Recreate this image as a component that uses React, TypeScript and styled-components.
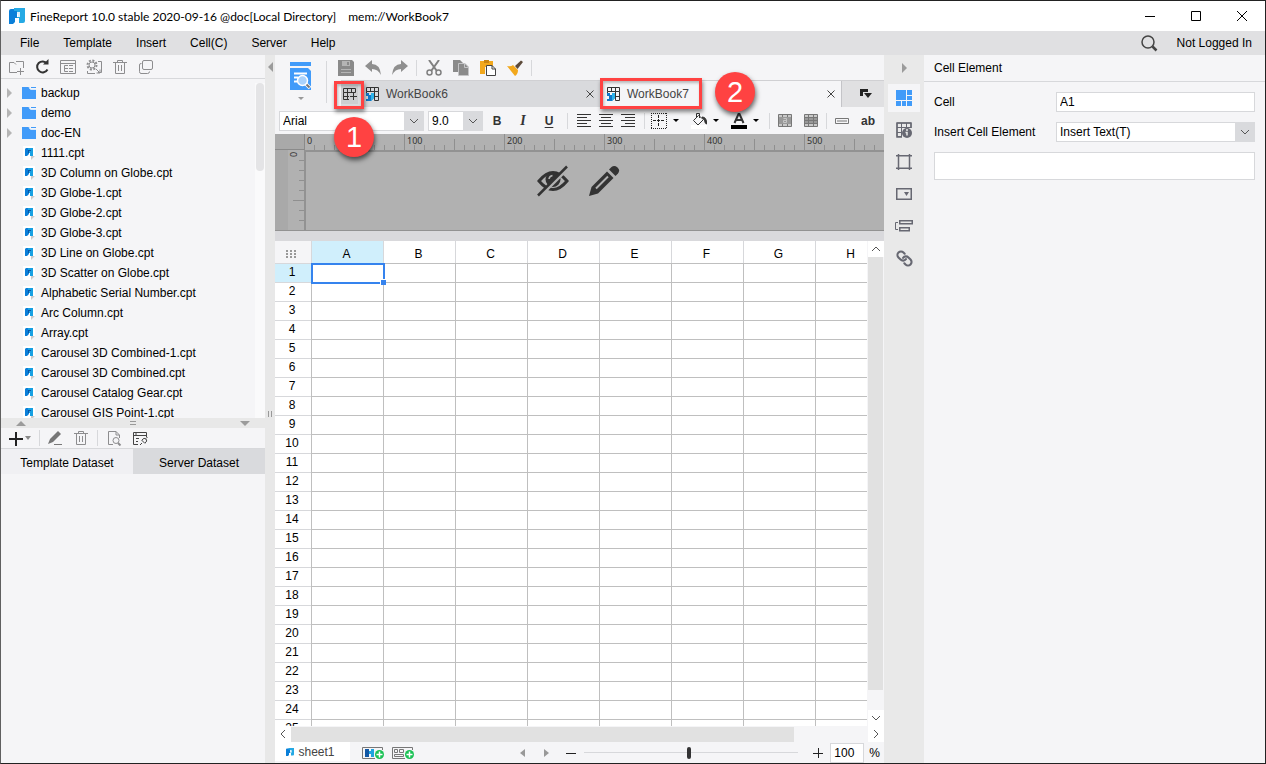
import React from "react";
import styled, { createGlobalStyle, css } from "styled-components";
import { Link } from "lucide-react";

const c = {
  panel: "#f5f5f7",
  bar: "#e0e0e2",
  gutter: "#e8e8e8",
  strip: "#d9dadd",
  line: "#d7d8db",
  icon: "#8d8d8f",
  dark: "#333334",
  blue: "#419bf9",
  red: "#ff4242",
};

const Global = createGlobalStyle`
  *, *::before, *::after { box-sizing: border-box; }
  body { margin: 0; background: ${c.panel}; }
  body, button, input, select, table {
    font-family: "Liberation Sans", Arial, sans-serif;
    font-size: 12px;
    color: #000;
  }
  button {
    border: 0; padding: 0; margin: 0; background: none;
    display: inline-flex; align-items: center; justify-content: center;
  }
  svg { display: block; flex: none; }
  ul { list-style: none; margin: 0; padding: 0; }
`;

/* ---------- shell ---------- */
const Window = styled.div`
  height: 100vh;
  display: flex;
  flex-direction: column;
  border: 1px solid #222;
  border-left-color: #606060;
  background: ${c.panel};
  overflow: hidden;
`;
const TitleBar = styled.header`
  flex: 0 0 30px;
  display: flex;
  align-items: center;
  padding-left: 8px;
  background: #fff;
  font-family: Lato, "Open Sans", sans-serif;
`;
const Title = styled.span`
  margin-left: 5px;
  margin-right: 7px;
  white-space: pre;
`;
const WindowButtons = styled.div`
  margin-left: auto;
  display: flex;
`;
const WindowButton = styled.button`
  width: 46px;
  height: 30px;
`;
const MenuBar = styled.nav`
  flex: 0 0 24px;
  display: flex;
  align-items: center;
  padding: 0 13px 0 7px;
  background: ${c.bar};
`;
const MenuItem = styled.button`
  height: 24px;
  padding: 0 12px;
`;
const MenuRight = styled.div`
  margin-left: auto;
  display: flex;
  gap: 19px;
`;
const Body = styled.main`
  flex: 1;
  min-height: 0;
  display: flex;
`;

/* ---------- shared controls ---------- */
const Row = styled.div<{ $h: number; $pad?: number; $line?: boolean }>`
  flex: 0 0 ${(p) => p.$h}px;
  display: flex;
  align-items: center;
  padding-left: ${(p) => p.$pad ?? 0}px;
  ${(p) => p.$line && css`border-bottom: 1px solid ${c.line};`}
`;
const ToolButton = styled.button<{ $w?: number }>`
  width: ${(p) => p.$w ?? 26}px;
  height: 20px;
  flex: none;
`;
const Sep = styled.span<{ $m?: number; $h?: number }>`
  width: 1px;
  height: ${(p) => p.$h ?? 16}px;
  margin: 0 ${(p) => p.$m ?? 3}px;
  background: ${c.line};
  flex: none;
`;
const PreviewSep = styled(Sep)`
  margin: 6px 0 0;
`;
const Group = styled.div`
  display: flex;
  gap: 6px;
`;
const SelectBox = styled.div<{ $w?: string }>`
  display: grid;
  width: ${(p) => p.$w ?? "100%"};
  height: 20px;
  flex: none;
  & > * { grid-area: 1 / 1; }
`;
const Selects = styled.div`
  display: flex;
  gap: 4px;
  margin-right: 1px;
`;
const Select = styled.select`
  appearance: none;
  width: 100%;
  height: 20px;
  border: 1px solid ${c.line};
  border-radius: 0;
  background: #fff;
  padding: 0 22px 0 3px;
`;
const SelectArrow = styled.span`
  justify-self: end;
  width: 20px;
  height: 20px;
  background: ${c.strip};
  display: flex;
  align-items: center;
  justify-content: center;
  pointer-events: none;
`;
const TextInput = styled.input<{ $h?: number }>`
  width: 100%;
  height: ${(p) => p.$h ?? 20}px;
  border: 1px solid ${c.line};
  background: #fff;
  padding: 0 3px;
`;

/* ---------- left side ---------- */
const Left = styled.aside`
  flex: 0 0 264px;
  display: flex;
  flex-direction: column;
  min-height: 0;
`;
const TreeArea = styled.div`
  flex: 0 0 339px;
  display: flex;
  overflow: hidden;
  padding-top: 4px;
`;
const Tree = styled.ul`
  flex: 1;
`;
const TreeRow = styled.button`
  display: flex;
  width: 100%;
  height: 20px;
  justify-content: flex-start;
  white-space: nowrap;
`;
const Twisty = styled.span`
  width: 20px;
  padding-left: 6px;
`;
const TreeIcon = styled.span`
  width: 20px;
  display: flex;
  padding-left: 1px;
`;
const TreeTrack = styled.div`
  width: 10px;
  background: #fafafb;
`;
const TreeThumb = styled.div`
  margin-left: 1px;
  width: 8px;
  height: 88px;
  border-radius: 4px;
  background: #e4e4e6;
`;
const HSplit = styled.div`
  flex: 0 0 10px;
  display: flex;
  align-items: center;
  justify-content: space-between;
  padding: 0 15px;
  background: ${c.gutter};
`;
const Tabs = styled.div`
  display: flex;
`;
const DatasetTab = styled.button<{ $on?: boolean }>`
  flex: 1;
  height: 25px;
  padding-top: 2px;
  background: ${(p) => (p.$on ? "#f0f0f3" : c.strip)};
`;
const Gutter = styled.div`
  flex: 0 0 10px;
  display: flex;
  flex-direction: column;
  align-items: center;
  justify-content: space-between;
  padding: 7px 0 346px;
  background: ${c.gutter};
`;

/* ---------- centre ---------- */
const Center = styled.section`
  flex: 1;
  min-width: 0;
  display: flex;
  flex-direction: column;
`;
const TopTools = styled.div`
  flex: 0 0 52px;
  display: flex;
`;
const Preview = styled.button`
  width: 51px;
  flex-direction: column;
  gap: 6px;
`;
const ToolsColumn = styled.div`
  flex: 1;
  min-width: 0;
  display: flex;
  flex-direction: column;
`;
const TabStrip = styled.div`
  height: 27px;
  margin-left: 14px;
  display: flex;
  border-top: 1px solid #d0d0d3;
  background: ${c.strip};
`;
const NewTab = styled.div`
  width: 24px;
  position: relative;
  display: flex;
  align-items: center;
`;
const NewTabButton = styled.button`
  width: 17px;
  height: 19px;
  background: #cdced1;
`;
const BookTab = styled.div<{ $on?: boolean }>`
  position: relative;
  flex: 1;
  display: flex;
  align-items: center;
  padding: 0 6px 0 ${(p) => (p.$on ? 7 : 1)}px;
  background: ${(p) => (p.$on ? c.panel : "transparent")};
`;
const BookName = styled.button`
  gap: 6px;
  color: #444;
  margin-right: auto;
`;
const TabList = styled.button`
  width: 43px;
  border-left: 1px solid #c4c4c8;
  background: ${c.bar};
  padding-left: 6px;
`;
const MarkBox = styled.span<{ $x: number; $y: number; $w: number; $h: number }>`
  position: absolute;
  left: ${(p) => p.$x}px;
  top: ${(p) => p.$y}px;
  width: ${(p) => p.$w}px;
  height: ${(p) => p.$h}px;
  border: 3px solid ${c.red};
  box-shadow: 1px 3px 4px rgba(0, 0, 0, 0.45), inset 1px 2px 3px rgba(0, 0, 0, 0.25);
  pointer-events: none;
  z-index: 2;
`;
const MarkDot = styled.span<{ $x: number; $y: number }>`
  position: absolute;
  left: ${(p) => p.$x}px;
  top: ${(p) => p.$y}px;
  width: 40px;
  height: 40px;
  border-radius: 50%;
  background: ${c.red};
  box-shadow: 1px 3px 5px rgba(0, 0, 0, 0.6);
  color: #fff;
  font: 29px/40px "Liberation Sans", Arial, sans-serif;
  text-align: center;
  pointer-events: none;
  z-index: 3;
`;
const TextStyle = styled(ToolButton)<{ $kind: "b" | "i" | "u" }>`
  color: ${c.dark};
  font-weight: bold;
  ${(p) => p.$kind === "i" && css`font-family: "Liberation Serif", serif; font-style: italic; font-size: 14px;`}
  ${(p) => p.$kind === "u" && css`text-decoration: underline; text-underline-offset: 2px;`}
`;
const DropTool = styled.button`
  width: 34px;
  height: 20px;
  justify-content: space-between;
  padding: 0 5px 0 1px;
`;
const ParamPane = styled.div`
  flex: 0 0 97px;
  display: grid;
  grid-template: 16px 1fr / 13px 16px 1fr;
  background: #b1b1b1;
  border-bottom: 1px solid #929292;
`;
const Corner = styled.div`
  grid-column: 1 / 3;
  background: #a9a9a9;
  border-bottom: 1px solid #8a8a8a;
`;
const HRuler = styled.div`
  overflow: hidden;
  border-left: 1px solid #8a8a8a;
`;
const Edge = styled.div`
  background: #a9a9a9;
`;
const VRuler = styled.div`
  overflow: hidden;
`;
const ParamCanvas = styled.div`
  border-left: 2px solid #929292;
  border-top: 2px solid #929292;
  display: flex;
  justify-content: center;
  gap: 18px;
  padding: 13px 34px 0 0;
`;
const PaneButton = styled.button`
  height: 32px;
`;
const PaneSplit = styled.div`
  flex: 0 0 10px;
  background: #d9d9dc;
`;
const SheetArea = styled.div`
  flex: 1;
  min-height: 0;
  display: flex;
`;
const SheetClip = styled.div`
  flex: 1;
  overflow: hidden;
  background: #fff;
`;
const Sheet = styled.table`
  width: 612px;
  table-layout: fixed;
  border-collapse: separate;
  border-spacing: 0;
  & th { font-weight: normal; padding: 0 2px 0 0; text-align: center; }
`;
const SelectAll = styled.td`
  width: 36px;
  height: 22px;
  padding: 4px 0 0 11px;
  background: ${c.panel};
`;
const ColHead = styled.th<{ $on?: boolean }>`
  width: 72px;
  height: 22px;
  line-height: 22px;
  border-left: 1px solid ${c.line};
  background: ${(p) => (p.$on ? "#d0effc" : "#fff")};
  & > span { display: block; height: 22px; line-height: 26px; }
`;
const RowHead = styled.th<{ $on?: boolean }>`
  height: 19px;
  line-height: 16px;
  vertical-align: top;
  border-top: 1px solid ${c.line};
  background: ${(p) => (p.$on ? "#d0effc" : "#fff")};
`;
const Cell = styled.td`
  padding: 0;
  border-top: 1px solid #bfbfbf;
  border-left: 1px solid #bfbfbf;
  position: relative;
`;
const Selection = styled.span`
  position: absolute;
  inset: -1px -2px -2px -1px;
  border: 2px solid #3583ee;
  z-index: 1;
  &::after {
    content: "";
    position: absolute;
    right: -3px;
    bottom: -3px;
    width: 6px;
    height: 6px;
    background: #3583ee;
    border-left: 1px solid #fff;
    border-top: 1px solid #fff;
  }
`;
const VScroll = styled.div`
  flex: 0 0 17px;
  display: flex;
  flex-direction: column;
  padding-left: 1px;
`;
const VThumb = styled.div`
  flex: 432;
  width: 15px;
  background: #e1e1e1;
`;
const Rest = styled.div<{ $n: number }>`
  flex: ${(p) => p.$n};
`;
const ScrollButton = styled.button`
  flex: none;
  width: 16px;
  height: 16px;
  background: #fff;
`;
const HScroll = styled.div`
  flex: 0 0 16px;
  display: flex;
`;
const HThumb = styled.div`
  flex: 503;
  margin-top: 1px;
  background: #e1e1e1;
`;
const BottomBar = styled.footer`
  flex: 0 0 21px;
  display: flex;
  align-items: center;
`;
const SheetTab = styled.button`
  width: 75px;
  height: 19px;
  align-self: flex-start;
  gap: 4px;
  background: #fff;
  color: #444;
  margin-right: 12px;
  padding-right: 4px;
`;
const AddButtons = styled.div`
  display: flex;
  gap: 8px;
  margin-right: 96px;
`;
const ZoomSlider = styled.input`
  flex: 1;
  min-width: 0;
  height: 16px;
  margin: 0 8px 0 0;
  appearance: none;
  background: linear-gradient(${c.line}, ${c.line}) center / 100% 1px no-repeat;
  &::-webkit-slider-thumb {
    appearance: none;
    width: 4px;
    height: 12px;
    border-radius: 2px;
    background: ${c.dark};
  }
`;
const Percent = styled.label`
  display: flex;
  align-items: center;
  gap: 5px;
  padding-right: 4px;
`;
const PercentInput = styled(TextInput)`
  width: 34px;
`;

/* ---------- right side ---------- */
const Rail = styled.nav`
  flex: 0 0 40px;
  display: flex;
  flex-direction: column;
  align-items: center;
  gap: 4px;
  background: #e9e9e9;
`;
const RailArrow = styled.button`
  width: 40px;
  height: 25px;
`;
const RailButton = styled.button<{ $on?: boolean }>`
  width: 32px;
  height: 28px;
  background: ${(p) => (p.$on ? c.panel : "transparent")};
`;
const LinkIcon = styled(Link)`
  transform: scaleX(-1);
  color: #676872;
`;
const Props = styled.aside`
  flex: 0 0 341px;
  display: flex;
  flex-direction: column;
`;
const Form = styled.div`
  display: grid;
  grid-template-columns: 112px 1fr;
  gap: 10px;
  padding: 10px;
  align-items: center;
`;
const Wide = styled.div`
  grid-column: 1 / 3;
`;

/* ---------- icons ---------- */
type SvgProps = { w?: number; h?: number; s?: string; f?: string; sw?: number; children: React.ReactNode };
const Svg = ({ w = 16, h = 16, s = c.icon, f = "none", sw = 1, children }: SvgProps) => (
  <svg width={w} height={h} viewBox={`0 0 ${w} ${h}`} stroke={s} fill={f} strokeWidth={sw} aria-hidden="true">
    {children}
  </svg>
);
const Tri = ({ dir, color = "#9b9b9b" }: { dir: "up" | "down" | "left" | "right"; color?: string }) => {
  const d = { up: "M0 5 5 0 10 5z", down: "M0 0H10L5 5z", left: "M5 0V10L0 5z", right: "M0 0V10L5 5z" }[dir];
  const v = dir === "up" || dir === "down";
  return <Svg w={v ? 10 : 5} h={v ? 5 : 10} s="none" f={color}><path d={d} /></Svg>;
};
const SmallCaret = ({ color = "#000" }: { color?: string }) => (
  <Svg w={6} h={3} s="none" f={color}><path d="M0 0H6L3 3z" /></Svg>
);
const Chevron = ({ r = 0 }: { r?: number }) => (
  <Svg w={12} h={12} s="#555"><path d="M2 4 6 8 10 4" transform={`rotate(${r} 6 6)`} /></Svg>
);
const Logo = ({ size = 16 }: { size?: number }) => (
  <svg width={size} height={size} viewBox="0 0 16 16" aria-hidden="true">
    <path d="M2 1H8V10H6V14L4 16H0V3Q0 1 2 1z" fill="#0a7fd9" />
    <path d="M5 0H16V13Q16 15 14 15H10V10H8V9H11V5H8V3H5z" fill="#25a9e4" />
    <path d="M8 4H11V9H9V6H8z" fill="#d9f0fb" />
  </svg>
);
const FileIcon = () => (
  <Svg w={14} h={14} s="none" f="#fff">
    <path d="M1 0H13V10L9 14H1z" />
    <path d="M9 14V10H13z" fill="#c9c9cc" />
    <path d="M4 2H7V8L5 10H3V3z" fill="#0a7fd9" />
    <path d="M6 2H11V10H8V7H6z" fill="#17a0e2" />
    <path d="M6 4H9V5H7V7H6z" fill="#0a55a5" />
  </Svg>
);
const FolderIcon = () => (
  <Svg w={14} h={12} s="none" f={c.blue}>
    <path d="M0 0H7L8 2H14V12H0z" /><path d="M9 0H14V1H9z" /><path d="M7 .5 8.500 2.500H14" fill="none" stroke="#d6e9fd" />
  </Svg>
);
const Trash = () => (
  <Svg><path d="M1 3.500H15M5.500 3V1.500H10.500V3M3.500 4V14.500H12.500V4M6.500 6V12M9.500 6V12" /></Svg>
);
const Grid = ({ plus }: { plus?: boolean }) => (
  <Svg w={14} h={14} s="#333">
    {plus ? <path d="M.5 1.500H12.500V5.500H.5zM.5 5.500V12.500H6M.5 9.500H6M4.500 1.500V12.500M8.500 1.500V5.500M7 9.500H14M10.500 6V13" />
      : <><path d="M.5.5H12.500V4.500H.5zM4.500.5V4.500M8.500.5V13.500H12.500V4.500M.5 4.500V7M8.500 9.500H12.500" />
        <path d="M0 6H3V8H5V6H8V11L5 14H0V12H2V9H0z" fill="#1178c8" stroke="none" /><path d="M5 6H8V11L5 14z" fill="#2eb3ea" stroke="none" /></>}
  </Svg>
);
const CloseX = () => <Svg w={8} h={8} s="#444"><path d="M.5.5 7.500 7.500M7.500.5.5 7.500" /></Svg>;
const Align = ({ k }: { k: "l" | "c" | "r" }) => {
  const x = { l: 0, c: 2, r: 4 }[k];
  return (
    <Svg w={14} h={13} s="#333">
      <path d={`M0 .5H14M${x} 3.500H${x + 10}M0 6.500H14M${x} 9.500H${x + 10}M0 12.500H14`} />
    </Svg>
  );
};
const AddBadge = ({ kind }: { kind: "report" | "form" }) => (
  <Svg w={22} h={14} s="#777">
    <path d="M20.500 1.500H.5V12.500H13M20.500 1.500V4" />
    {kind === "report"
      ? <><path d="M3 3H7V11H3z" fill="#1257a4" stroke="none" /><path d="M7 5H9V3H12V11H9V8H7z" fill="#1fa4df" stroke="none" /></>
      : <path d="M2.500 3.500H5.500V6.500H2.500zM7.500 3.500H11.500V6.500H7.500zM2.500 8.500H11.500V10.500H2.500z" />}
    <circle cx="17.500" cy="8.500" r="4.500" fill="#19c153" stroke="none" />
    <path d="M14.500 8.500H20.500M17.500 5.500V11.500" stroke="#fff" strokeWidth="1.500" />
  </Svg>
);

const files = [
  "1111.cpt", "3D Column on Globe.cpt", "3D Globe-1.cpt", "3D Globe-2.cpt", "3D Globe-3.cpt",
  "3D Line on Globe.cpt", "3D Scatter on Globe.cpt", "Alphabetic Serial Number.cpt", "Arc Column.cpt",
  "Array.cpt", "Carousel 3D Combined-1.cpt", "Carousel 3D Combined.cpt", "Carousel Catalog Gear.cpt",
  "Carousel GIS Point-1.cpt",
];
const cols = ["A", "B", "C", "D", "E", "F", "G", "H"];
const rows = Array.from({ length: 25 }, (_, i) => i + 1);

const RulerTicks = () => (
  <svg width="579" height="16" fill="none" stroke="#8f8f8f" aria-hidden="true">
    {Array.from({ length: 58 }, (_, i) => (
      <path key={i} d={`M${i * 10 - 0.5} ${i % 10 === 0 ? 0 : i % 5 === 0 ? 5 : 11}V16`} />
    ))}
    {[0, 100, 200, 300, 400, 500].map((n) => (
      <text key={n} x={n + 2} y={10} fill="#333" stroke="none" fontSize="9" fontFamily="Noto Sans, sans-serif">
        {n}
      </text>
    ))}
  </svg>
);

function LeftPane() {
  return (
    <Left>
      <Row $h={24} $pad={2} $line>
        <ToolButton aria-label="New folder"><Svg><path d="M9 13.500H1.500V3.500H6L8 5.500M8 2.500H15.500V9M9 12.500H16M12.500 9V16" /></Svg></ToolButton>
        <ToolButton aria-label="Refresh"><Svg s="#333" sw={2}><path d="M13 4.500A5.500 5.500 0 1 0 13.500 10.500" /><path d="M9 5.500H14.500V0z" fill="#333" stroke="none" /></Svg></ToolButton>
        <ToolButton aria-label="Template list"><Svg><path d="M.5 1.500H15.500V14.500H.5zM.5 4.500H15.500M4.500 6.500H8M4.500 6.500V12.500H8M4.500 9.500H8M9 6.500H13M9 9.500H13M9 12.500H13" /></Svg></ToolButton>
        <ToolButton aria-label="Settings">
          <Svg><circle cx="6" cy="6" r="3" /><circle cx="6" cy="6" r="4.500" strokeDasharray="2 1.500" strokeWidth="2" /><path d="M12 2.500H15.500V13.500H12M1.500 12V14.500H9M10 10 14 14M14 10.500V14H10.500" /></Svg>
        </ToolButton>
        <ToolButton aria-label="Delete"><Trash /></ToolButton>
        <ToolButton aria-label="Copy"><Svg><rect x="4.500" y="1.500" width="10" height="9" rx="1.500" /><path d="M3.500 4.500H3Q1.500 4.500 1.500 6V12.500Q1.500 14.500 3 14.500H9.500Q11.500 14.500 11.500 12.500" /></Svg></ToolButton>
      </Row>
      <TreeArea>
        <Tree>
          {["backup", "demo", "doc-EN"].map((n) => (
            <li key={n}><TreeRow><Twisty><Tri dir="right" color="#b5b5b5" /></Twisty><TreeIcon><FolderIcon /></TreeIcon>{n}</TreeRow></li>
          ))}
          {files.map((n) => (
            <li key={n}><TreeRow><Twisty /><TreeIcon><FileIcon /></TreeIcon>{n}</TreeRow></li>
          ))}
        </Tree>
        <TreeTrack><TreeThumb /></TreeTrack>
      </TreeArea>
      <HSplit>
        <Tri dir="up" />
        <Svg w={6} h={4} s="#999"><path d="M0 .5H6M0 3.500H6" /></Svg>
        <Tri dir="down" />
      </HSplit>
      <Row $h={21} $pad={2} $line>
        <ToolButton $w={34} aria-label="Add dataset">
          <Svg w={15} h={15} s="#222" sw={2}><path d="M0 8H14M7 1V15" /></Svg>
          <Svg w={7} h={4} s="none" f="#888"><path d="M1 0H7L4 4z" /></Svg>
        </ToolButton>
        <Sep $m={2} />
        <ToolButton aria-label="Edit"><Svg s="none" f="#777"><path d="M1 14 3 9 11 1 14 4 6 12z" /><path d="M7 14H15V15H7z" /></Svg></ToolButton>
        <ToolButton aria-label="Remove"><Trash /></ToolButton>
        <Sep />
        <ToolButton aria-label="Preview dataset"><Svg><path d="M7 14.500H2.500V1.500H10L13.500 5V8M10 1.500V5H13" /><circle cx="10" cy="10.500" r="3" /><path d="M12 13 14.500 15.500" strokeWidth="2" /></Svg></ToolButton>
        <ToolButton aria-label="Connection"><Svg s="#444"><path d="M6 14.500H1.500V2.500H14.500V7M1.500 5.500H14.500M3 4H5M4 8.500H7M4 11.500H6" /><path d="M8 15 10 13M9.500 10 13 13.500M10 10Q12 7 14 9T13 13M14 8.500 15.500 7" /></Svg></ToolButton>
      </Row>
      <Tabs>
        <DatasetTab $on>Template Dataset</DatasetTab>
        <DatasetTab>Server Dataset</DatasetTab>
      </Tabs>
    </Left>
  );
}

function TopArea() {
  return (
    <TopTools>
      <Preview aria-label="Preview">
        <svg width="22" height="29" viewBox="0 0 22 29" aria-hidden="true">
          <path d="M0 0H21V4H0z" fill={c.blue} /><path d="M0 6H18L21 9V28H0z" fill={c.blue} />
          <path d="M4 11.500H17M4 15.500H8M4 19.500H7" stroke="#fff" strokeWidth="2" />
          <circle cx="12.500" cy="18.500" r="5" fill="#a9d2fc" stroke="#fff" strokeWidth="1.500" />
          <path d="M16 22 20 26" stroke="#fff" strokeWidth="3.500" /><path d="M16.500 22.500 19.500 25.500" stroke="#777" strokeWidth="2" />
        </svg>
        <SmallCaret color="#999" />
      </Preview>
      <PreviewSep $h={42} />
      <ToolsColumn>
        <Row $h={25} $pad={5}>
          <ToolButton $w={27} aria-label="Save"><Svg s="none" f="#8a8a8a"><path d="M0 0H14L16 2V16H0z" /><path d="M4 1H12V6H4z" fill="#b5b5b5" /><path d="M9 2H11V5H9z" fill="#8a8a8a" /><path d="M3 9H13V10H3zM3 12H13V13H3z" fill="#b5b5b5" /></Svg></ToolButton>
          <ToolButton $w={27} aria-label="Undo"><Svg s="none" f="#8f8f8f"><path d="M0 6 7 0V4Q15 4 16 15 13 9 7 9V12z" /></Svg></ToolButton>
          <ToolButton $w={27} aria-label="Redo"><Svg s="none" f="#8f8f8f"><path d="M16 6 9 0V4Q1 4 0 15 3 9 9 9V12z" /></Svg></ToolButton>
          <Sep />
          <ToolButton $w={27} aria-label="Cut"><Svg s="#808080" sw={2}><circle cx="3.500" cy="12.500" r="2.500" strokeWidth="1.500" /><circle cx="12.500" cy="12.500" r="2.500" strokeWidth="1.500" /><path d="M3 0 10.500 10.500M13 0 5.500 10.500" /></Svg></ToolButton>
          <ToolButton $w={27} aria-label="Copy"><Svg s="none" f="#8a8a8a"><path d="M0 0H7L10 3V12H0z" /><path d="M5.500 3.500H12L15.500 7V15.500H5.500z" stroke="#c4c4c6" /><path d="M11.500 4V7.500H15" fill="none" stroke="#c4c4c6" /></Svg></ToolButton>
          <ToolButton $w={27} aria-label="Paste"><Svg s="none" f="#f2a81d"><path d="M0 1H13V7H5V14H0z" /><path d="M4 0H9V3H4z" fill="#c98512" /><path d="M6.500 5.500H12L15.500 9V15.500H6.500z" fill="#fff" stroke="#444" /><path d="M12 5.500V9H15.500" fill="none" stroke="#444" /></Svg></ToolButton>
          <ToolButton $w={27} aria-label="Format painter"><Svg s="none" f="#f2a81d"><path d="M6 5 11 10Q11 14 8 16L0 6Q4 7 6 5z" /><path d="M8 6 14 .5 16 2 10.500 9z" fill="#5c4a3a" /></Svg></ToolButton>
          <Sep />
        </Row>
        <TabStrip>
          <NewTab>
            <NewTabButton aria-label="New workbook"><Grid plus /></NewTabButton>
            <MarkBox $x={-7} $y={0} $w={30} $h={28} />
            <MarkDot $x={-7} $y={36}>1</MarkDot>
          </NewTab>
          <BookTab>
            <BookName><Grid />WorkBook6</BookName>
            <button aria-label="Close WorkBook6"><CloseX /></button>
          </BookTab>
          <BookTab $on>
            <BookName><Grid />WorkBook7</BookName>
            <button aria-label="Close WorkBook7"><CloseX /></button>
            <MarkBox $x={0} $y={-3} $w={102} $h={31} />
            <MarkDot $x={115} $y={-9}>2</MarkDot>
          </BookTab>
          <TabList aria-label="All workbooks"><Svg w={13} h={10} s="none" f="#222"><path d="M0 0H8V3H3V7H0zM4 4H12L8 9z" /></Svg></TabList>
        </TabStrip>
      </ToolsColumn>
    </TopTools>
  );
}

function FormatBar() {
  return (
    <Row $h={27} $pad={4}>
      <Selects>
        <SelectBox $w="145px"><Select aria-label="Font"><option>Arial</option></Select><SelectArrow><Chevron /></SelectArrow></SelectBox>
        <SelectBox $w="55px"><Select aria-label="Size"><option>9.0</option></Select><SelectArrow><Chevron /></SelectArrow></SelectBox>
      </Selects>
      <TextStyle $kind="b">B</TextStyle>
      <TextStyle $kind="i">I</TextStyle>
      <TextStyle $kind="u">U</TextStyle>
      <Sep $m={5} />
      <ToolButton $w={22} aria-label="Align left"><Align k="l" /></ToolButton>
      <ToolButton $w={22} aria-label="Align center"><Align k="c" /></ToolButton>
      <ToolButton $w={22} aria-label="Align right"><Align k="r" /></ToolButton>
      <Sep $m={5} />
      <Group>
        <DropTool aria-label="Borders"><Svg s="#222"><path d="M0 .5H16M0 15.500H16M.5 0V16M15.500 0V16" strokeDasharray="1 1" /><path d="M7.500 2V14M2 7.500H14" strokeDasharray="3 1" /></Svg><SmallCaret /></DropTool>
        <DropTool aria-label="Fill colour"><Svg s="#333"><path d="M0 12H16V16H0z" fill="#fff" stroke="none" /><path d="M7.500 2.500 2.500 7.500 7 12 12.500 6.500zM5.500 5V.5H8.500V5" /><path d="M11 4Q16 4 15.500 11 14 11 13.500 7z" fill="#333" /></Svg><SmallCaret /></DropTool>
        <DropTool aria-label="Text colour"><Svg s="#333" sw={2}><path d="M3.500 10 7.500 1H8.500L12.500 10M5 7H11" /><path d="M0 12H16V16H0z" fill="#000" stroke="none" /></Svg><SmallCaret /></DropTool>
      </Group>
      <Sep $m={5} />
      <Group>
        <ToolButton $w={20} aria-label="Merge cells"><Svg w={14} h={13} s="#777"><path d="M.5.5H13.500V12.500H.5z" fill="#c9c9c9" /><path d="M1 3H13V10H1z" fill="#999" stroke="none" /><path d="M4.500 1V3M9.500 1V3M4.500 10V12M9.500 10V12" /><path d="M5.500 4.500H8.500V8.500H5.500V6.500H8" stroke="#c4c4c4" /></Svg></ToolButton>
        <ToolButton $w={20} aria-label="Unmerge cells"><Svg w={14} h={13} s="#777"><path d="M.5.5H13.500V12.500H.5z" fill="#c9c9c9" /><path d="M1 4H13V9H1z" fill="#999" stroke="none" /><path d="M4.500 1V12M9.500 1V12M1 3.500H13M1 6.500H13M1 9.500H13" /></Svg></ToolButton>
      </Group>
      <Sep $m={5} />
      <Group>
        <ToolButton $w={20} aria-label="Widget"><Svg w={14} h={6} s="#777"><path d="M.5.5H13.500V5.500H.5zM2 3H4M5 2V4M6 3H12" /></Svg></ToolButton>
        <TextStyle $w={20} $kind="b">ab</TextStyle>
      </Group>
    </Row>
  );
}

function ParameterPane() {
  return (
    <ParamPane>
      <Corner />
      <HRuler><RulerTicks /></HRuler>
      <Edge />
      <VRuler>
        <svg width="16" height="78" fill="none" stroke="#8f8f8f" aria-hidden="true">
          {[1, 2, 3, 4, 5, 6, 7].map((i) => <path key={i} d={`M${i === 5 ? 5 : 11} ${i * 10 + 0.5}H16`} />)}
          <text x="-7" y="9" transform="rotate(-90)" fill="#333" stroke="none" fontSize="9" fontFamily="Noto Sans, sans-serif">0</text>
        </svg>
      </VRuler>
      <ParamCanvas>
        <PaneButton aria-label="Hide">
          <Svg w={34} h={32} s="#333" sw={3}>
            <path d="M3 16Q10 7.500 17 7.500T31 16Q24 24.500 17 24.500T3 16z" />
            <circle cx="17" cy="14.500" r="7.500" fill="#333" stroke="none" />
            <path d="M13 14Q13.500 11 16.500 10.500" stroke="#b1b1b1" strokeWidth="1.500" />
            <path d="M4 31.500 33 2.500" stroke="#b1b1b1" strokeWidth="3" />
            <path d="M2 30.500 31 1.500" strokeWidth="2.500" />
          </Svg>
        </PaneButton>
        <PaneButton aria-label="Edit">
          <Svg w={32} h={32} s="none" f="#333">
            <path d="M1 31 3.500 22 19 6.500 25.500 13 10 28.500z" />
            <path d="M21 4.500 23.500 2Q26.500 0 29.500 2.500T30 8.500L27.500 11z" />
            <path d="M8 23.500 20 11.500" stroke="#b1b1b1" strokeWidth="2" />
          </Svg>
        </PaneButton>
      </ParamCanvas>
    </ParamPane>
  );
}

function SheetView() {
  return (
    <SheetArea>
      <SheetClip>
        <Sheet>
          <thead>
            <tr>
              <SelectAll>
                <Svg w={10} h={8} s="none" f="#999">
                  {[0, 4, 8].map((x) => [0, 3, 6].map((y) => <rect key={`${x}${y}`} x={x} y={y} width="2" height="2" />))}
                </Svg>
              </SelectAll>
              {cols.map((n) => <ColHead key={n} $on={n === "A"}><span>{n}</span></ColHead>)}
            </tr>
          </thead>
          <tbody>
            {rows.map((r) => (
              <tr key={r}>
                <RowHead $on={r === 1}>{r}</RowHead>
                {cols.map((n) => <Cell key={n}>{r === 1 && n === "A" && <Selection />}</Cell>)}
              </tr>
            ))}
          </tbody>
        </Sheet>
      </SheetClip>
      <VScroll>
        <ScrollButton aria-label="Scroll up"><Chevron r={180} /></ScrollButton>
        <VThumb />
        <Rest $n={20} />
        <ScrollButton aria-label="Scroll down"><Chevron /></ScrollButton>
      </VScroll>
    </SheetArea>
  );
}

function Bottom() {
  return (
    <>
      <HScroll>
        <ScrollButton aria-label="Scroll left"><Chevron r={90} /></ScrollButton>
        <HThumb />
        <Rest $n={74} />
        <ScrollButton aria-label="Scroll right"><Chevron r={-90} /></ScrollButton>
      </HScroll>
      <BottomBar>
        <SheetTab><Logo size={8} />sheet1</SheetTab>
        <AddButtons>
          <button aria-label="Add report sheet"><AddBadge kind="report" /></button>
          <button aria-label="Add form sheet"><AddBadge kind="form" /></button>
        </AddButtons>
        <ToolButton $w={24} aria-label="Previous sheet"><Svg w={5} h={8} s="none" f="#999"><path d="M5 0V8L0 4z" /></Svg></ToolButton>
        <ToolButton $w={24} aria-label="Next sheet"><Svg w={5} h={8} s="none" f="#999"><path d="M0 0V8L5 4z" /></Svg></ToolButton>
        <ToolButton aria-label="Zoom out"><Svg w={10} h={10} s="#222"><path d="M0 5.500H10" /></Svg></ToolButton>
        <ZoomSlider type="range" aria-label="Zoom" min={0} max={100} defaultValue={49} />
        <ToolButton $w={24} aria-label="Zoom in"><Svg w={10} h={10} s="#222"><path d="M0 5.500H10M5.500 0V10" /></Svg></ToolButton>
        <Percent><PercentInput defaultValue="100" aria-label="Zoom percent" />%</Percent>
      </BottomBar>
    </>
  );
}

function RightPane() {
  const g = "#676872";
  return (
    <>
      <Rail>
        <RailArrow aria-label="Collapse"><Tri dir="right" /></RailArrow>
        <RailButton $on aria-label="Cell element"><Svg s="none" f={c.blue}><path d="M0 0H10V10H0zM11 0H16V5H11zM11 6H16V10H11zM0 11H5V16H0zM6 11H10V16H6zM11 11H16V16H11z" /></Svg></RailButton>
        <RailButton aria-label="Cell attributes"><Svg s={g}><path d="M6 14.500H1V1H15V6M1 5.500H15M1 10.500H6M5.500 1V14M10.500 1V6" /><path d="M6 15H1V1H15V6" strokeWidth="1.500" /><circle cx="11" cy="11" r="5" fill={g} stroke="none" /><path d="M11 7V9M9.500 10.500H11V13.500" stroke="#e9e9e9" strokeWidth="1.500" /></Svg></RailButton>
        <RailButton aria-label="Floating element"><Svg s={g} sw={1.5}><path d="M2.500 0V16M13.500 0V16M0 1.750H16M0 14.250H16" /></Svg></RailButton>
        <RailButton aria-label="Widget settings"><Svg s={g} sw={1.5}><path d="M.75 2.750H15.250V13.250H.75z" /><path d="M8 6H13L10.500 10z" fill={g} stroke="none" /></Svg></RailButton>
        <RailButton aria-label="Condition attributes"><Svg w={18} s={g} sw={1.5}><path d="M4.750 2.750H17.250V5.750H4.750zM4.750 9.750H14.250V12.750H4.750z" /><path d="M3 4.500H.5V11.500H3" strokeWidth="1" /></Svg></RailButton>
        <RailButton aria-label="Hyperlink"><LinkIcon size={17} strokeWidth={3} /></RailButton>
      </Rail>
      <Props>
        <Row $h={27} $pad={10} $line>Cell Element</Row>
        <Form>
          <label htmlFor="cell">Cell</label>
          <TextInput id="cell" defaultValue="A1" />
          <label htmlFor="kind">Insert Cell Element</label>
          <SelectBox><Select id="kind"><option>Insert Text(T)</option></Select><SelectArrow><Chevron /></SelectArrow></SelectBox>
          <Wide><TextInput $h={28} aria-label="Cell text" /></Wide>
        </Form>
      </Props>
    </>
  );
}

export default function App() {
  return (
    <>
      <Global />
      <Window>
        <TitleBar>
          <Logo />
          <Title>FineReport 10.0 stable 2020-09-16 @doc[Local Directory]</Title>
          <Title>mem://WorkBook7</Title>
          <WindowButtons>
            <WindowButton aria-label="Minimize"><Svg w={10} h={10} s="#000"><path d="M0 5.500H10" /></Svg></WindowButton>
            <WindowButton aria-label="Maximize"><Svg w={10} h={10} s="#000"><path d="M.5.5H9.500V9.500H.5z" /></Svg></WindowButton>
            <WindowButton aria-label="Close"><Svg w={10} h={10} s="#000"><path d="M0 0 10 10M10 0 0 10" /></Svg></WindowButton>
          </WindowButtons>
        </TitleBar>
        <MenuBar>
          {["File", "Template", "Insert", "Cell(C)", "Server", "Help"].map((m) => <MenuItem key={m}>{m}</MenuItem>)}
          <MenuRight>
            <button aria-label="Search"><Svg w={17} h={17} s="#444" sw={1.5}><circle cx="7" cy="7" r="6" /><path d="M11.500 11.500 15.500 15.500" strokeWidth="2.500" /></Svg></button>
            <button>Not Logged In</button>
          </MenuRight>
        </MenuBar>
        <Body>
          <LeftPane />
          <Gutter>
            <Tri dir="left" />
            <Svg w={4} h={6} s="#999"><path d="M.5 0V6M3.500 0V6" /></Svg>
          </Gutter>
          <Center>
            <TopArea />
            <FormatBar />
            <ParameterPane />
            <PaneSplit />
            <SheetView />
            <Bottom />
          </Center>
          <RightPane />
        </Body>
      </Window>
    </>
  );
}
